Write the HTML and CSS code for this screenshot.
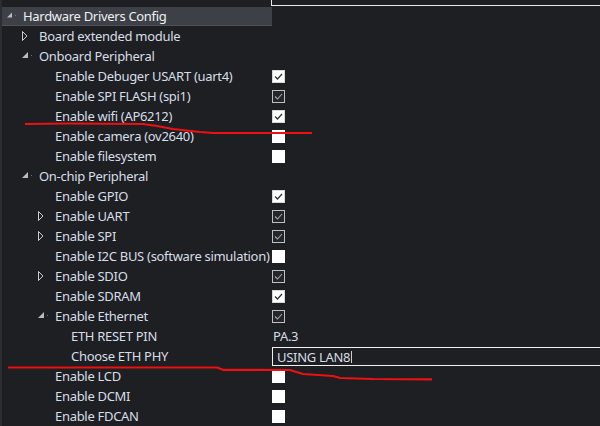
FILE: index.html
```html
<!DOCTYPE html>
<html>
<head>
<meta charset="utf-8">
<link rel="stylesheet" href="styles.css">
</head>
<body>
<div class="tree">
  <div class="row top-row">
    <div class="label"></div>
    <div class="value"><div class="edit-tail"></div></div>
  </div>

  <div class="row sel">
    <div class="label l0"><span class="tw"><svg width="17" height="20"><polygon points="6,6.5 6,11.5 1,11.5" fill="#b8bcc2"/><rect x="9" y="9" width="1" height="1" fill="#70747a"/></svg></span><span class="txt">Hardware Drivers Config</span></div>
    <div class="value"></div>
  </div>

  <div class="row">
    <div class="label l1"><span class="tw"><svg width="17" height="20"><polygon points="0.5,5.5 5,10 0.5,14.5" fill="none" stroke="#c8ccd2" stroke-width="1"/></svg></span><span class="txt">Board extended module</span></div>
    <div class="value"></div>
  </div>

  <div class="row">
    <div class="label l1"><span class="tw"><svg width="17" height="20"><polygon points="6,6 6,12 0,12" fill="#b8bcc2"/><rect x="9" y="9" width="1" height="1" fill="#70747a"/></svg></span><span class="txt">Onboard Peripheral</span></div>
    <div class="value"></div>
  </div>

  <div class="row">
    <div class="label l2"><span class="tw"></span><span class="txt">Enable Debuger USART (uart4)</span></div>
    <div class="value"><span class="cb on"><svg width="11" height="11"><polyline points="2,5.5 4.5,8 9,3" fill="none" stroke="#333" stroke-width="1.3"/></svg></span></div>
  </div>

  <div class="row">
    <div class="label l2"><span class="tw"></span><span class="txt">Enable SPI FLASH (spi1)</span></div>
    <div class="value"><span class="cb dis"><svg width="11" height="11"><polyline points="2,5.5 4.5,8 9,3" fill="none" stroke="#a4a7ac" stroke-width="1.1"/></svg></span></div>
  </div>

  <div class="row">
    <div class="label l2"><span class="tw"></span><span class="txt">Enable wifi (AP6212)</span></div>
    <div class="value"><span class="cb on"><svg width="11" height="11"><polyline points="2,5.5 4.5,8 9,3" fill="none" stroke="#333" stroke-width="1.3"/></svg></span></div>
  </div>

  <div class="row">
    <div class="label l2"><span class="tw"></span><span class="txt">Enable camera (ov2640)</span></div>
    <div class="value"><span class="cb off"></span></div>
  </div>

  <div class="row">
    <div class="label l2"><span class="tw"></span><span class="txt">Enable filesystem</span></div>
    <div class="value"><span class="cb off"></span></div>
  </div>

  <div class="row">
    <div class="label l1"><span class="tw"><svg width="17" height="20"><polygon points="6,6 6,12 0,12" fill="#b8bcc2"/><rect x="9" y="9" width="1" height="1" fill="#70747a"/></svg></span><span class="txt">On-chip Peripheral</span></div>
    <div class="value"></div>
  </div>

  <div class="row">
    <div class="label l2"><span class="tw"></span><span class="txt">Enable GPIO</span></div>
    <div class="value"><span class="cb on"><svg width="11" height="11"><polyline points="2,5.5 4.5,8 9,3" fill="none" stroke="#333" stroke-width="1.3"/></svg></span></div>
  </div>

  <div class="row">
    <div class="label l2"><span class="tw"><svg width="17" height="20"><polygon points="0.5,5.5 5,10 0.5,14.5" fill="none" stroke="#c8ccd2" stroke-width="1"/></svg></span><span class="txt">Enable UART</span></div>
    <div class="value"><span class="cb dis"><svg width="11" height="11"><polyline points="2,5.5 4.5,8 9,3" fill="none" stroke="#a4a7ac" stroke-width="1.1"/></svg></span></div>
  </div>

  <div class="row">
    <div class="label l2"><span class="tw"><svg width="17" height="20"><polygon points="0.5,5.5 5,10 0.5,14.5" fill="none" stroke="#c8ccd2" stroke-width="1"/></svg></span><span class="txt">Enable SPI</span></div>
    <div class="value"><span class="cb dis"><svg width="11" height="11"><polyline points="2,5.5 4.5,8 9,3" fill="none" stroke="#a4a7ac" stroke-width="1.1"/></svg></span></div>
  </div>

  <div class="row">
    <div class="label l2"><span class="tw"></span><span class="txt">Enable I2C BUS (software simulation)</span></div>
    <div class="value"><span class="cb off"></span></div>
  </div>

  <div class="row">
    <div class="label l2"><span class="tw"><svg width="17" height="20"><polygon points="0.5,5.5 5,10 0.5,14.5" fill="none" stroke="#c8ccd2" stroke-width="1"/></svg></span><span class="txt">Enable SDIO</span></div>
    <div class="value"><span class="cb dis"><svg width="11" height="11"><polyline points="2,5.5 4.5,8 9,3" fill="none" stroke="#a4a7ac" stroke-width="1.1"/></svg></span></div>
  </div>

  <div class="row">
    <div class="label l2"><span class="tw"></span><span class="txt">Enable SDRAM</span></div>
    <div class="value"><span class="cb on"><svg width="11" height="11"><polyline points="2,5.5 4.5,8 9,3" fill="none" stroke="#333" stroke-width="1.3"/></svg></span></div>
  </div>

  <div class="row">
    <div class="label l2"><span class="tw"><svg width="17" height="20"><polygon points="6,6 6,12 0,12" fill="#b8bcc2"/><rect x="9" y="9" width="1" height="1" fill="#70747a"/></svg></span><span class="txt">Enable Ethernet</span></div>
    <div class="value"><span class="cb dis"><svg width="11" height="11"><polyline points="2,5.5 4.5,8 9,3" fill="none" stroke="#a4a7ac" stroke-width="1.1"/></svg></span></div>
  </div>

  <div class="row">
    <div class="label l3"><span class="tw"></span><span class="txt">ETH RESET PIN</span></div>
    <div class="value"><span class="val">PA.3</span></div>
  </div>

  <div class="row">
    <div class="label l3"><span class="tw"></span><span class="txt">Choose ETH PHY</span></div>
    <div class="value"><div class="edit"><span class="val">USING LAN8</span><span class="caret"></span></div></div>
  </div>

  <div class="row">
    <div class="label l2"><span class="tw"></span><span class="txt">Enable LCD</span></div>
    <div class="value"><span class="cb off"></span></div>
  </div>

  <div class="row">
    <div class="label l2"><span class="tw"></span><span class="txt">Enable DCMI</span></div>
    <div class="value"><span class="cb off"></span></div>
  </div>

  <div class="row">
    <div class="label l2"><span class="tw"></span><span class="txt">Enable FDCAN</span></div>
    <div class="value"><span class="cb off"></span></div>
  </div>

  <svg class="marks" width="600" height="426" viewBox="0 0 600 426">
    <polyline points="25,124 68,123.5 143,124 157,126 173,129 200,132 213,133 312,133" fill="none" stroke="#ee1111" stroke-width="2.2" stroke-linejoin="round"/>
    <polyline points="8,367.5 217,367.5 223,369.8 290,370 303,374 333,376 340,378 373,379 432,379.3" fill="none" stroke="#ee1111" stroke-width="2.2" stroke-linejoin="round"/>
  </svg>
</div>
</body>
</html>
```
FILE: styles.css
```css
html, body {
  margin: 0;
  padding: 0;
  background: #1e1f22;
}
body {
  width: 600px;
  height: 426px;
  overflow: hidden;
  font-family: "Noto Sans", "Open Sans", sans-serif;
  font-size: 13px;
  letter-spacing: -0.3px;
  color: #d6dee8;
}
.tree {
  position: relative;
  border-left: 2px solid #2b2d31;
  height: 426px;
  box-sizing: border-box;
}
.row {
  display: flex;
  height: 20px;
}
.top-row {
  height: 6px;
}
.label {
  width: 270px;
  flex: none;
  display: flex;
  align-items: center;
  box-sizing: border-box;
  white-space: nowrap;
  overflow: visible;
}
.l0 { padding-left: 4px; }
.l1 { padding-left: 20px; }
.l2 { padding-left: 36px; }
.l3 { padding-left: 52px; }
.tw {
  width: 17px;
  height: 20px;
  flex: none;
  display: block;
}
.tw svg { display: block; }
.txt {
  line-height: 20px;
}
.sel .label {
  background: #3d4147;
  border-top: 1px solid #1e1f22;
  border-bottom: 1px solid #4e5258;
}
.sel .txt { color: #eef0f2; }
.value {
  flex: 1;
  display: flex;
  align-items: center;
  position: relative;
}
.edit-tail {
  position: absolute;
  left: -1px;
  top: 0;
  right: 0;
  height: 5px;
  border-left: 1px solid #e8e8e8;
  border-bottom: 1px solid #e8e8e8;
}
.cb {
  width: 13px;
  height: 13px;
  box-sizing: border-box;
  display: flex;
  align-items: center;
  justify-content: center;
  margin-top: 1px;
}
.cb svg { display: block; }
.cb.on {
  background: #ffffff;
  border: 1px solid #d8d8d8;
}
.cb.off {
  background: #ffffff;
  border: 1px solid #ffffff;
}
.cb.dis {
  background: #24262a;
  border: 1px solid #bcbfc4;
}
.val {
  padding-left: 1px;
  color: #d4dde6;
}
.edit {
  position: absolute;
  left: 0;
  right: 0;
  top: 1px;
  bottom: 0;
  border: 1px solid #f0f0f0;
  border-right: none;
  display: flex;
  align-items: center;
  padding-left: 3px;
}
.caret {
  width: 1px;
  height: 12px;
  background: #c8d0d8;
  margin-left: 1px;
}
.marks {
  position: absolute;
  left: -2px;
  top: 0;
  pointer-events: none;
}
```
